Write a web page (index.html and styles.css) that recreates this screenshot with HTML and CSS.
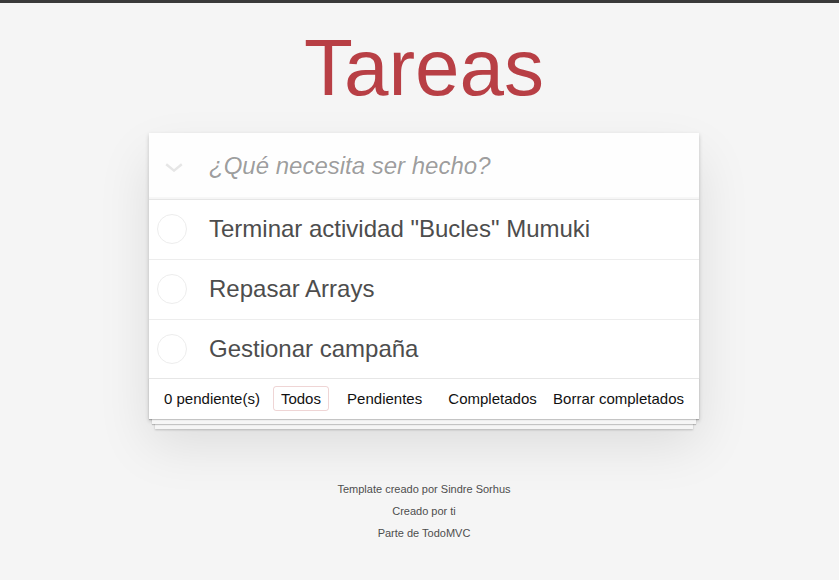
FILE: index.html
```html
<!DOCTYPE html>
<html lang="es">
<head>
<meta charset="utf-8">
<title>Tareas</title>
<link rel="stylesheet" href="styles.css">
</head>
<body>
<div class="topbar"></div>
<div class="wrap">
  <div class="page">
    <h1 class="title">Tareas</h1>
    <section class="todoapp">
      <header class="new-row">
        <span class="toggle-all">
          <svg width="18" height="9" viewBox="0 0 18 9"><polyline points="1.2,1.2 9,7.6 16.8,1.2" fill="none" stroke="#e6e6e6" stroke-width="2.4"/></svg>
        </span>
        <input class="new-todo" placeholder="¿Qué necesita ser hecho?">
      </header>
      <ul class="todo-list">
        <li class="item"><span class="toggle"></span><span class="label">Terminar actividad "Bucles" Mumuki</span></li>
        <li class="item"><span class="toggle"></span><span class="label">Repasar Arrays</span></li>
        <li class="item"><span class="toggle"></span><span class="label">Gestionar campaña</span></li>
      </ul>
      <footer class="footer">
        <span class="count">0 pendiente(s)</span>
        <ul class="filters">
          <li><a class="selected">Todos</a></li>
          <li><a>Pendientes</a></li>
          <li><a>Completados</a></li>
        </ul>
        <span class="clear">Borrar completados</span>
      </footer>
    </section>
    <footer class="info">
      <p>Template creado por Sindre Sorhus</p>
      <p>Creado por ti</p>
      <p>Parte de TodoMVC</p>
    </footer>
  </div>
</div>
</body>
</html>
```
FILE: styles.css
```css
html, body {
  margin: 0;
  padding: 0;
}
body {
  background: #f5f5f5;
  font-family: "Liberation Sans", Arial, Helvetica, sans-serif;
  font-size: 14px;
  line-height: 19.6px;
  color: #111111;
}
.topbar {
  height: 3px;
  background: #3a3a3a;
}
.wrap {
  padding-left: 9px;
}
.page {
  width: 550px;
  margin: 0 auto;
}
.title {
  margin: 0;
  padding-top: 25px;
  padding-bottom: 25px;
  font-size: 80px;
  line-height: 80px;
  font-weight: 400;
  text-align: center;
  color: #b83f45;
}
.todoapp {
  background: #fff;
  box-shadow: 0 2px 4px 0 rgba(0, 0, 0, 0.2), 0 25px 50px 0 rgba(0, 0, 0, 0.1);
  margin: 0 0 40px 0;
}
.new-row {
  display: flex;
  align-items: center;
  height: 66px;
  background: rgba(0, 0, 0, 0.003);
  box-shadow: inset 0 -2px 1px rgba(0, 0, 0, 0.03);
  border-bottom: 1px solid #e6e6e6;
}
.toggle-all {
  display: flex;
  width: 44px;
  padding-left: 16px;
  margin-top: 2px;
  box-sizing: border-box;
}
.toggle-all svg {
  display: block;
}
.new-todo {
  flex: 1;
  min-width: 0;
  height: 66px;
  box-sizing: border-box;
  padding: 16px 16px 16px 16px;
  border: none;
  outline: none;
  background: transparent;
  font-family: inherit;
  font-size: 24px;
  line-height: 33.6px;
  color: #4d4d4d;
}
.new-todo::placeholder {
  font-style: italic;
  font-weight: 400;
  color: rgba(0, 0, 0, 0.4);
}
.todo-list {
  margin: 0;
  padding: 0;
  list-style: none;
}
.item {
  display: flex;
  align-items: center;
  font-size: 24px;
  border-bottom: 1px solid #ededed;
}
.item:last-child {
  border-bottom: none;
}
.toggle {
  flex: none;
  width: 28px;
  height: 28px;
  margin-left: 8px;
  border: 1px solid #ededed;
  border-radius: 50%;
}
.label {
  margin-left: 22px;
  padding: 15px 15px 15px 0;
  line-height: 1.2;
  color: #4d4d4d;
}
.footer {
  display: flex;
  height: 20px;
  padding: 10px 15px;
  font-size: 15px;
  line-height: 19.6px;
  border-top: 1px solid #e6e6e6;
  box-shadow: 0 1px 1px rgba(0, 0, 0, 0.2),
    0 8px 0 -3px #f6f6f6,
    0 9px 1px -3px rgba(0, 0, 0, 0.2),
    0 16px 0 -6px #f6f6f6,
    0 17px 2px -6px rgba(0, 0, 0, 0.2);
  color: #111111;
  white-space: nowrap;
}
.filters {
  margin: 0 0 0 10px;
  padding: 0;
  list-style: none;
}
.filters li {
  display: inline;
}
.filters a {
  margin: 3px;
  padding: 3px 7px;
  border: 1px solid transparent;
  border-radius: 3px;
  color: inherit;
}
.filters a.selected {
  border-color: rgba(175, 47, 47, 0.2);
}
.clear {
  margin-left: auto;
}
.info {
  margin-top: 65px;
  color: #4d4d4d;
  font-size: 11px;
  text-align: center;
  text-shadow: 0 1px 0 rgba(255, 255, 255, 0.5);
}
.info p {
  margin: 11px 0;
  line-height: 1;
}
```
